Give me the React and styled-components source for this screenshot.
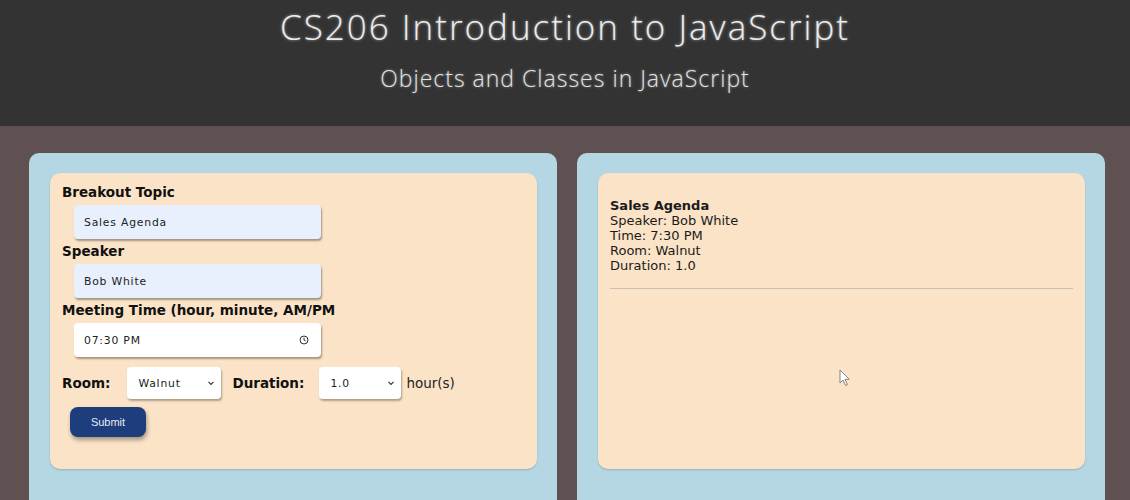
import styled, { createGlobalStyle } from "styled-components";

const GlobalStyle = createGlobalStyle`
  html, body {
    margin: 0;
    padding: 0;
    background: #5f5151;
    overflow: hidden;
  }
  body {
    font-family: "DejaVu Sans", Verdana, sans-serif;
  }
`;

const Header = styled.header`
  background: #333333;
  height: 126px;
  text-align: center;
  color: #ececec;
  font-family: "Open Sans", "Lato", sans-serif;
  padding-top: 3px;
  box-sizing: border-box;
`;

const Title = styled.h1`
  margin: 0;
  font-size: 35px;
  font-weight: 300;
  letter-spacing: 2px;
  line-height: 48px;
  text-shadow: 0 0 3px rgba(255, 255, 255, 0.55);
`;

const Subtitle = styled.h2`
  margin: 12px 0 0;
  font-size: 23px;
  font-weight: 300;
  letter-spacing: 1px;
  line-height: 30px;
  color: #e2e2e2;
  text-shadow: 0 0 3px rgba(255, 255, 255, 0.45);
`;

const Main = styled.main`
  display: flex;
  gap: 20px;
  padding: 27px 25px 0 29px;
`;

const Panel = styled.section`
  flex: 1;
  background: #b4d7e3;
  border-radius: 10px;
  padding: 20px 20px 40px 21px;
  height: 380px;
  box-sizing: border-box;
  position: relative;
`;

const Card = styled.div`
  background: #fae3c6;
  border-radius: 10px;
  height: 296px;
  box-sizing: border-box;
  padding: ${(p) => (p.$output ? "25px 12px 0" : "11px 12px 0")};
  box-shadow: 0 1px 2px rgba(0, 0, 0, 0.18);
`;

const Label = styled.div`
  font-weight: bold;
  font-size: 13.5px;
  color: #111;
  line-height: 17px;
  margin-bottom: 4px;
`;

const Field = styled.div`
  margin-left: 12px;
  width: 247px;
  height: 34px;
  box-sizing: border-box;
  display: flex;
  align-items: center;
  justify-content: space-between;
  padding: 0 12px 0 10px;
  background: ${(p) => (p.$filled ? "#e8f0fe" : "#ffffff")};
  border-radius: 4px;
  box-shadow: 1px 2px 2px rgba(0, 0, 0, 0.35);
  font-size: 10.8px;
  letter-spacing: 0.8px;
  color: #222;
  margin-bottom: 4px;
`;

const Row = styled.div`
  display: flex;
  align-items: center;
  margin-top: 10px;
`;

const InlineLabel = styled.span`
  font-weight: bold;
  font-size: 13.5px;
  color: #111;
  margin-right: ${(p) => p.$gap};
`;

const Select = styled.div`
  width: ${(p) => p.$w};
  height: 32px;
  box-sizing: border-box;
  display: flex;
  align-items: center;
  justify-content: space-between;
  padding: 0 6px 0 11px;
  background: #fff;
  border-radius: 4px;
  box-shadow: 1px 2px 2px rgba(0, 0, 0, 0.3);
  font-size: 10.8px;
  letter-spacing: 0.8px;
  color: #222;
  margin-right: ${(p) => p.$gap};
`;

const Unit = styled.span`
  font-size: 13.5px;
  color: #222;
`;

const SubmitButton = styled.button`
  margin: 8px 0 0 8px;
  width: 76px;
  height: 30px;
  border: none;
  border-radius: 8px;
  background: #1d3d7c;
  color: #e8ecf5;
  font-family: "Liberation Sans", Arial, sans-serif;
  font-size: 11px;
  box-shadow: 1px 3px 4px rgba(0, 0, 0, 0.35);
`;

const Agenda = styled.div`
  font-size: 13px;
  line-height: 15px;
  color: #1b1b1b;
`;

const AgendaTitle = styled.div`
  font-weight: bold;
`;

const Rule = styled.hr`
  border: none;
  border-top: 1px solid #c9c0b4;
  margin: 15px 0 0;
`;

const Cursor = styled.svg`
  position: absolute;
  left: 262px;
  top: 216px;
`;

function Chevron() {
  return (
    <svg width="8" height="8" viewBox="0 0 8 8">
      <path d="M1.5 2.8 L4 5.3 L6.5 2.8" stroke="#333" strokeWidth="1.2" fill="none" />
    </svg>
  );
}

function Clock() {
  return (
    <svg width="10" height="10" viewBox="0 0 10 10">
      <circle cx="5" cy="5" r="4" stroke="#333" strokeWidth="1" fill="none" />
      <path d="M5 2.6 V5 L6.6 6" stroke="#333" strokeWidth="1" fill="none" />
    </svg>
  );
}

export default function App() {
  return (
    <>
      <GlobalStyle />
      <Header>
        <Title>CS206 Introduction to JavaScript</Title>
        <Subtitle>Objects and Classes in JavaScript</Subtitle>
      </Header>
      <Main>
        <Panel>
          <Card>
            <Label>Breakout Topic</Label>
            <Field $filled>Sales Agenda</Field>
            <Label>Speaker</Label>
            <Field $filled>Bob White</Field>
            <Label>Meeting Time (hour, minute, AM/PM</Label>
            <Field>
              <span>07:30 PM</span>
              <Clock />
            </Field>
            <Row>
              <InlineLabel $gap="17px">Room:</InlineLabel>
              <Select $w="94px" $gap="11px">
                <span>Walnut</span>
                <Chevron />
              </Select>
              <InlineLabel $gap="15px">Duration:</InlineLabel>
              <Select $w="82px" $gap="5px">
                <span>1.0</span>
                <Chevron />
              </Select>
              <Unit>hour(s)</Unit>
            </Row>
            <SubmitButton>Submit</SubmitButton>
          </Card>
        </Panel>
        <Panel>
          <Card $output>
            <Agenda>
              <AgendaTitle>Sales Agenda</AgendaTitle>
              <div>Speaker: Bob White</div>
              <div>Time: 7:30 PM</div>
              <div>Room: Walnut</div>
              <div>Duration: 1.0</div>
            </Agenda>
            <Rule />
          </Card>
          <Cursor width="12" height="18" viewBox="0 0 12 18">
            <path d="M1 1 L1 14 L4 11 L6.5 16.5 L8.5 15.6 L6 10.3 L10.2 10.3 Z" fill="#fff" stroke="#777" strokeWidth="0.9" />
          </Cursor>
        </Panel>
      </Main>
    </>
  );
}
